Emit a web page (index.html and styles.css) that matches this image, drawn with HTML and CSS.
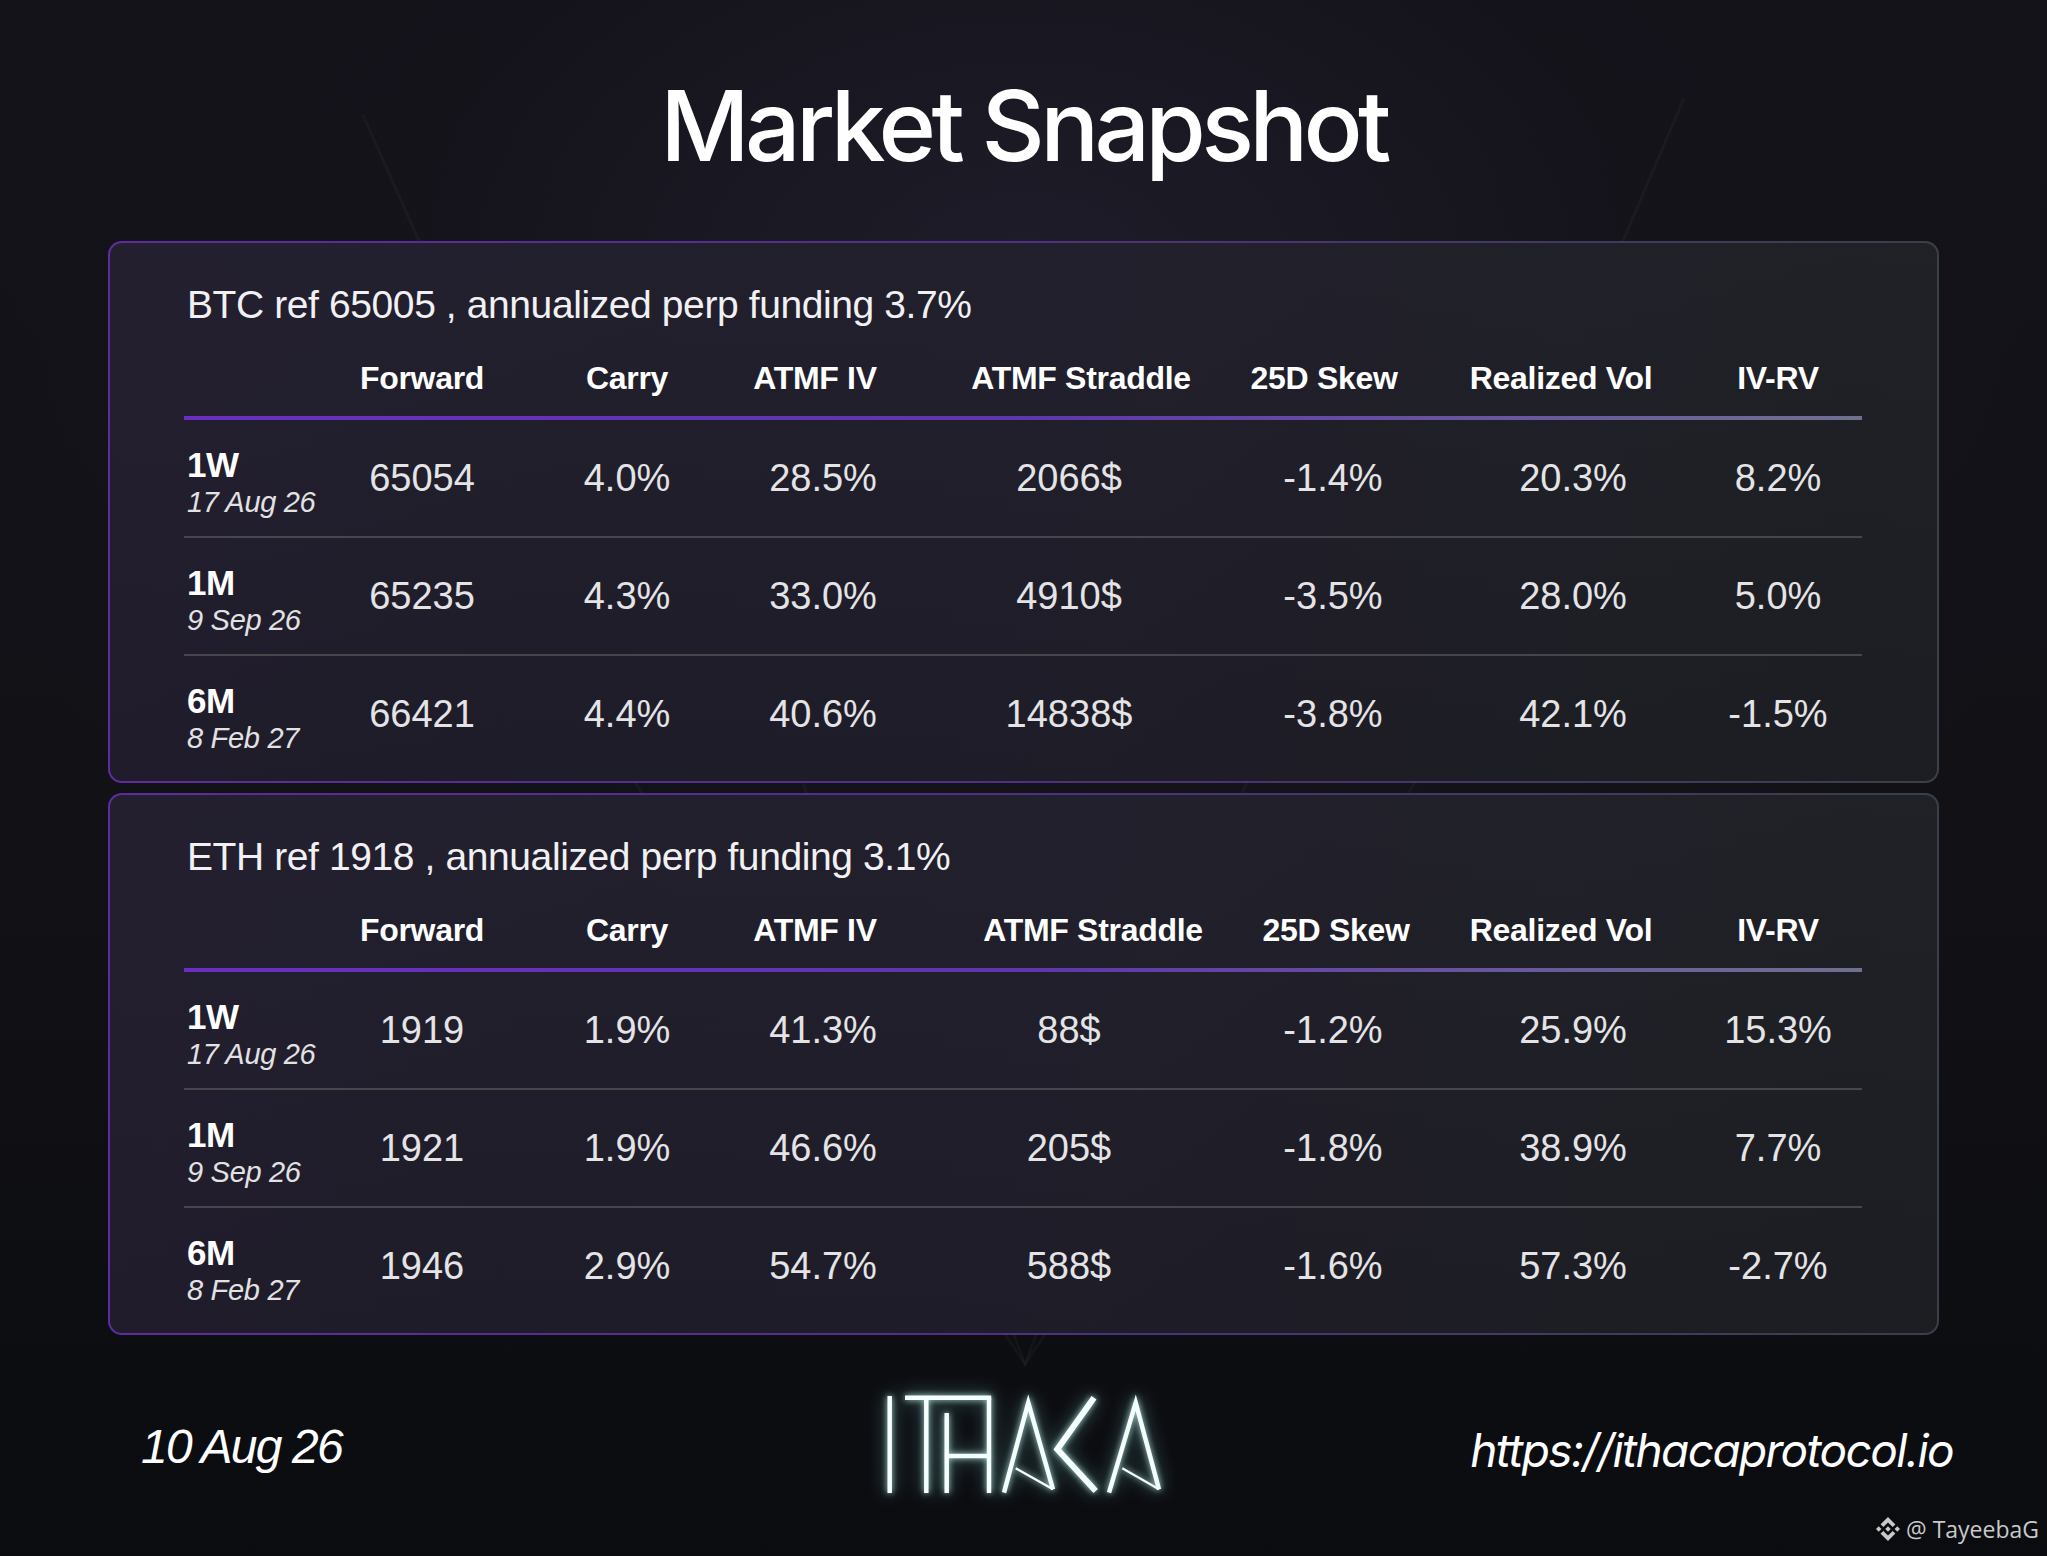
FILE: index.html
```html
<!DOCTYPE html>
<html lang="en">
<head>
<meta charset="utf-8">
<title>Market Snapshot</title>
<link rel="stylesheet" href="styles.css">
</head>
<body>
<svg class="emblem" width="2047" height="1556" viewBox="0 0 2047 1556" aria-hidden="true">
  <g fill="none" stroke="rgba(255,255,255,0.03)" stroke-width="3">
    <path d="M363 115 L614 679 L620 760"/>
    <path d="M1684 98 L1436 679 L1430 760"/>
    <path d="M914 548 L1031 281 L1149 548"/>
    <path d="M783 731 L1025 1364 L1266 731"/>
    <path d="M620 760 L1025 1364 L1430 760"/>
  </g>
</svg>
<main class="page">
  <h1 class="title">Market Snapshot</h1>
  <div class="panels">
    <section class="panel">
      <h2 class="panel-title">BTC ref 65005 , annualized perp funding 3.7%</h2>
      <div class="thead">
        <div class="th"></div>
        <div class="th">Forward</div>
        <div class="th">Carry</div>
        <div class="th">ATMF IV</div>
        <div class="th">ATMF Straddle</div>
        <div class="th">25D Skew</div>
        <div class="th">Realized Vol</div>
        <div class="th">IV-RV</div>
      </div>
      <div class="tr">
        <div class="tenor"><span class="tenor-name">1W</span><span class="tenor-date">17 Aug 26</span></div>
        <div class="td">65054</div><div class="td">4.0%</div><div class="td">28.5%</div><div class="td">2066$</div><div class="td">-1.4%</div><div class="td">20.3%</div><div class="td">8.2%</div>
      </div>
      <div class="tr">
        <div class="tenor"><span class="tenor-name">1M</span><span class="tenor-date">9 Sep 26</span></div>
        <div class="td">65235</div><div class="td">4.3%</div><div class="td">33.0%</div><div class="td">4910$</div><div class="td">-3.5%</div><div class="td">28.0%</div><div class="td">5.0%</div>
      </div>
      <div class="tr">
        <div class="tenor"><span class="tenor-name">6M</span><span class="tenor-date">8 Feb 27</span></div>
        <div class="td">66421</div><div class="td">4.4%</div><div class="td">40.6%</div><div class="td">14838$</div><div class="td">-3.8%</div><div class="td">42.1%</div><div class="td">-1.5%</div>
      </div>
    </section>
    <section class="panel">
      <h2 class="panel-title">ETH ref 1918 , annualized perp funding 3.1%</h2>
      <div class="thead thead-eth">
        <div class="th"></div>
        <div class="th">Forward</div>
        <div class="th">Carry</div>
        <div class="th">ATMF IV</div>
        <div class="th">ATMF Straddle</div>
        <div class="th">25D Skew</div>
        <div class="th">Realized Vol</div>
        <div class="th">IV-RV</div>
      </div>
      <div class="tr">
        <div class="tenor"><span class="tenor-name">1W</span><span class="tenor-date">17 Aug 26</span></div>
        <div class="td">1919</div><div class="td">1.9%</div><div class="td">41.3%</div><div class="td">88$</div><div class="td">-1.2%</div><div class="td">25.9%</div><div class="td">15.3%</div>
      </div>
      <div class="tr">
        <div class="tenor"><span class="tenor-name">1M</span><span class="tenor-date">9 Sep 26</span></div>
        <div class="td">1921</div><div class="td">1.9%</div><div class="td">46.6%</div><div class="td">205$</div><div class="td">-1.8%</div><div class="td">38.9%</div><div class="td">7.7%</div>
      </div>
      <div class="tr">
        <div class="tenor"><span class="tenor-name">6M</span><span class="tenor-date">8 Feb 27</span></div>
        <div class="td">1946</div><div class="td">2.9%</div><div class="td">54.7%</div><div class="td">588$</div><div class="td">-1.6%</div><div class="td">57.3%</div><div class="td">-2.7%</div>
      </div>
    </section>
  </div>
  <footer class="footer">
    <div class="date">10 Aug 26</div>
    <svg class="logo" width="310" height="125" viewBox="0 0 310 125" role="img" aria-label="ITHAKA">
      <title>ITHAKA</title>
      <g fill="none" stroke="#f4fffd" stroke-width="4.5" stroke-linejoin="miter">
        <path d="M20.7 15 V112"/>
        <path d="M36 16.7 H122.2"/>
        <path d="M57.3 16.7 V112"/>
        <path d="M77.7 32 V112"/>
        <path d="M120 16.7 V112"/>
        <path d="M77.7 75 H120"/>
        <path d="M135 111.7 L159.3 21.7 L184 108.3"/>
        <path d="M240 111.7 L266.7 21.7 L290 108.3"/>
      </g>
      <path d="M225 16.7 L188.3 68.3 L226.7 110" fill="none" stroke="#f4fffd" stroke-width="6"/>
      <g fill="none" stroke="#f4fffd" stroke-width="2.2">
        <path d="M146.7 87.3 L184 108.3"/>
        <path d="M253.3 87.3 L290 108.3"/>
      </g>
    </svg>
    <div class="url">https://ithacaprotocol.io</div>
  </footer>
</main>
<div class="watermark">
  <svg class="bnb" width="24" height="24" viewBox="0 0 126.61 126.61" aria-hidden="true">
    <g fill="#c9c9c9">
      <path d="M38.73 53.2l24.59-24.58 24.6 24.6 14.3-14.31L63.32 0 24.43 38.9l14.3 14.3z"/>
      <path d="M0 63.31l14.3-14.31 14.31 14.31-14.31 14.3z"/>
      <path d="M38.73 73.41l24.59 24.59 24.6-24.6 14.31 14.29-38.9 38.91-38.91-38.88-.02-.02z"/>
      <path d="M98 63.31l14.3-14.31 14.31 14.3-14.31 14.32z"/>
      <path d="M77.83 63.3L63.32 48.78 52.59 59.51l-1.24 1.23-2.54 2.54-.02.02.02.03 14.51 14.5 14.51-14.52.01-.01-.01-.01z"/>
    </g>
  </svg>
  <span>@ TayeebaG</span>
</div>
</body>
</html>
```

FILE: styles.css
```css
* { box-sizing: border-box; }

html, body {
  margin: 0;
  padding: 0;
}

body {
  width: 2047px;
  height: 1556px;
  overflow: hidden;
  position: relative;
  color: #ffffff;
  font-family: "Liberation Sans", Arial, sans-serif;
  background-color: #0d0d12;
  background-image:
    radial-gradient(ellipse 1150px 760px at 50% 18%, rgba(42, 39, 58, 0.5) 0%, rgba(24, 23, 32, 0.3) 55%, rgba(0, 0, 0, 0) 100%),
    linear-gradient(180deg, #131219 0%, #111116 55%, #0b0c10 100%);
}

.emblem {
  position: absolute;
  left: 0;
  top: 0;
  z-index: 0;
}

.page {
  position: relative;
  z-index: 1;
  padding-top: 77px;
}

.title {
  margin: 0 0 66px;
  text-align: center;
  font-family: Inter, "Liberation Sans", sans-serif;
  font-weight: 500;
  font-size: 98px;
  line-height: 98px;
  letter-spacing: -0.048em;
  color: #ffffff;
}

.panels {
  display: flex;
  flex-direction: column;
  gap: 10px;
  padding: 0 108px;
}

.panel {
  border: 2px solid transparent;
  border-radius: 14px;
  padding: 42px 75px 9px 74px;
  background:
    linear-gradient(180deg, rgba(29, 30, 35, 0.9) 0%, rgba(25, 26, 30, 0.9) 100%) padding-box,
    linear-gradient(90deg, #5d2da0 0%, #4f3088 45%, #3b3f47 100%) border-box;
}

.panel-title {
  margin: 0 0 38px 3px;
  font-weight: 400;
  font-size: 39px;
  line-height: 39px;
  letter-spacing: -0.4px;
  color: #f1f1f3;
}

.thead {
  display: grid;
  grid-template-columns: 135.5px 205px 205px 171px 361px 125px 349px 85px;
  padding-bottom: 26px;
  background: linear-gradient(90deg, #6a2fc0 0%, #5e36ad 50%, #6f7090 100%) left bottom / 100% 4px no-repeat;
}

.thead-eth {
  grid-template-columns: 135.5px 205px 205px 171px 385px 101px 349px 85px;
}

.th {
  display: flex;
  justify-content: center;
  font-weight: 700;
  font-size: 32px;
  line-height: 32px;
  letter-spacing: -0.3px;
  white-space: nowrap;
  color: #ffffff;
}

.tr {
  display: grid;
  grid-template-columns: 135.5px 205px 205px 187px 305px 223px 257px 153px;
  align-items: center;
  height: 118px;
  border-bottom: 2px solid #45474d;
}

.tr:last-child {
  height: 116px;
  border-bottom: none;
}

.tenor {
  display: flex;
  flex-direction: column;
  gap: 5.5px;
  margin-top: 8px;
  padding-left: 3px;
  white-space: nowrap;
}

.tenor-name {
  font-weight: 700;
  font-size: 35px;
  line-height: 35px;
  letter-spacing: -0.5px;
  color: #ffffff;
}

.tenor-date {
  font-style: italic;
  font-size: 29px;
  line-height: 29px;
  letter-spacing: -0.3px;
  color: #e2e2e4;
}

.td {
  display: flex;
  justify-content: center;
  font-size: 38px;
  line-height: 38px;
  white-space: nowrap;
  color: #e4e4e6;
}

.footer {
  display: grid;
  grid-template-columns: 1fr auto 1fr;
  align-items: center;
  margin-top: 46px;
  padding: 0 94px;
}

.date {
  justify-self: start;
  margin-left: 47px;
  margin-top: 6px;
  font-style: italic;
  font-size: 48px;
  line-height: 48px;
  letter-spacing: -1.8px;
  color: #ffffff;
  white-space: nowrap;
}

.logo {
  display: block;
  filter: drop-shadow(0 0 3px rgba(210, 255, 250, 0.85)) drop-shadow(0 0 9px rgba(130, 225, 215, 0.45));
}

.url {
  justify-self: end;
  margin-top: 12px;
  font-family: Inter, "Liberation Sans", sans-serif;
  font-style: italic;
  font-weight: 400;
  font-size: 46px;
  line-height: 46px;
  letter-spacing: -0.035em;
  color: #ffffff;
  white-space: nowrap;
}

.watermark {
  position: absolute;
  right: 8px;
  bottom: 14px;
  z-index: 2;
  display: flex;
  align-items: center;
  gap: 6px;
  font-family: "Open Sans", "Liberation Sans", sans-serif;
  font-size: 23px;
  line-height: 26px;
  color: #c9c9c9;
}

.bnb {
  display: block;
}
```
